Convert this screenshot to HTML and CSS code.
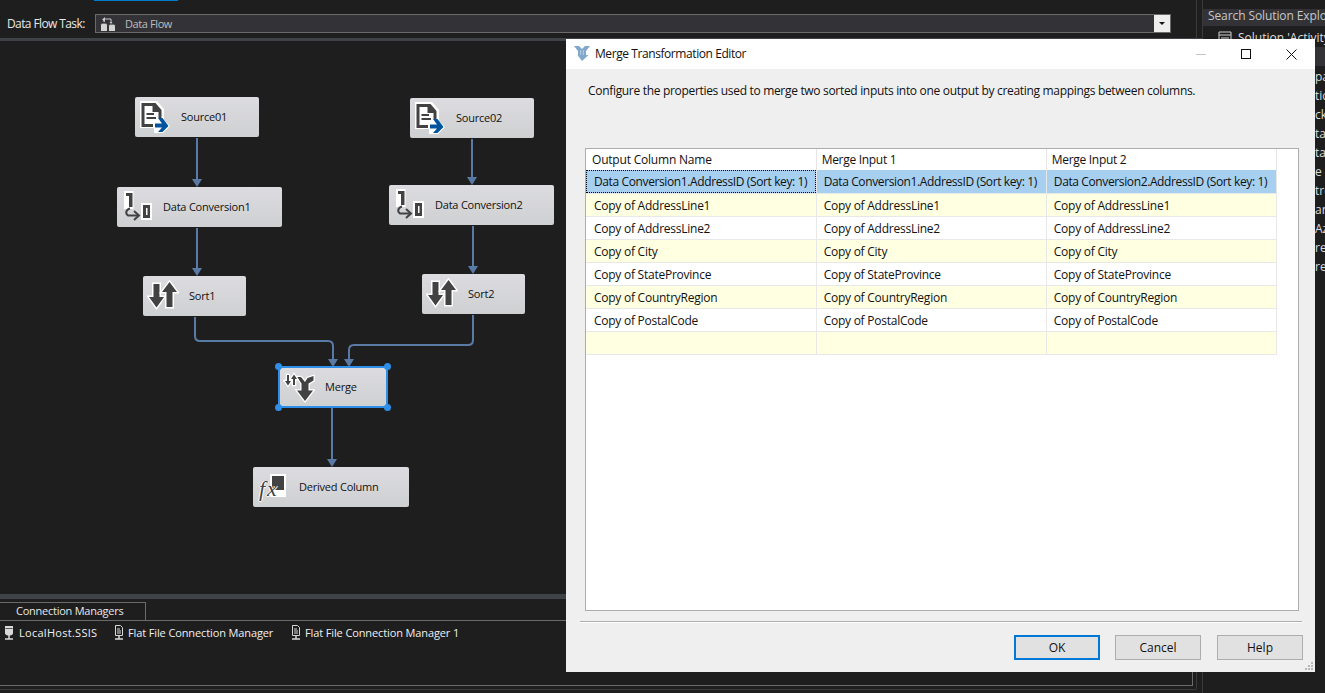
FILE: index.html
```html
<!DOCTYPE html>
<html lang="en">
<head>
<meta charset="utf-8">
<title>Merge Transformation Editor</title>
<link rel="stylesheet" href="styles.css">
</head>
<body>
<svg class="defs" width="0" height="0" aria-hidden="true">
  <defs>
    <symbol id="i-source" viewBox="0 0 32 33">
      <path d="M1 1h17l7 8v11l6 6-7 7h-9v-5H1z" fill="#fff"/>
      <path d="M2.500 3h14l6 7v8h-3v-6h-6V6H5.500v18H14v3H2.500z" fill="#424242"/>
      <path d="M7.500 13h7.500v2H7.500zM7.500 17h9.500v2H7.500z" fill="#424242"/>
      <path d="M16 23.500h7l-4-5.500h4.500l6 8-6 6H19l4-4.500h-7z" fill="#00539c"/>
    </symbol>
    <symbol id="i-conv" viewBox="0 0 32 33">
      <path d="M3 1h9.500v18H3zM20 13h11v17H20z" fill="#fff"/>
      <path d="M5 3h6.500v14H8V6H5z" fill="#424242"/>
      <path fill-rule="evenodd" d="M22 15h7v13h-7zM25 18v7h1.500v-7z" fill="#424242"/>
      <path d="M9 18.500c-4 1-5 5-2 7h11" fill="none" stroke="#424242" stroke-width="2"/>
      <path d="M13 21l5 4.500-5 4.500" fill="none" stroke="#424242" stroke-width="2"/>
    </symbol>
    <symbol id="i-sort" viewBox="0 0 32 33">
      <g fill="#424242" stroke="#fff" stroke-width="3" paint-order="stroke">
        <path d="M6.500 5h6v13h4.500l-7.500 10.500L2 18h4.500z"/>
        <path d="M19.500 28V13H15l7.500-10L30 13h-4.500v15z"/>
      </g>
    </symbol>
    <symbol id="i-merge" viewBox="0 0 32 33">
      <g fill="#424242" stroke="#fff" stroke-width="2.500" paint-order="stroke">
        <path d="M14 7h4l4 5 2.500-4 6-2v4.500l-5 3v7h4.500L22 31l-8-10.500h4.500v-7z"/>
        <path d="M4 5h2v6h2l-3 4.500L2 11h2z"/>
        <path d="M10 15V9H8l3-4.500L14 9h-2v6z"/>
      </g>
    </symbol>
    <symbol id="i-fx" viewBox="0 0 32 33">
      <path d="M13 4h16v23H13z" fill="#fff"/>
      <path d="M15 6h12v14H15z" fill="#424242"/>
    </symbol>
    <symbol id="i-flow" viewBox="0 0 16 16">
      <path d="M1 8h6v7H1zM9 9h6v6H9z" fill="#d4d4d4"/>
      <path d="M1 8.500c0-1.500 6-1.500 6 0M9 9.500c0-1.500 6-1.500 6 0" fill="none" stroke="#777"/>
      <path d="M4 6V3h7v4" fill="none" stroke="#c8c8c8"/>
      <path d="M2 3.500l3-2.500v5zM9.500 6h3l-1.500 2z" fill="#c8c8c8"/>
    </symbol>
    <symbol id="i-db" viewBox="0 0 11 16">
      <path d="M2 1h8v7c0 2-2 2.500-4 2.500S2 10 2 8z" fill="#d8d8d8"/>
      <path d="M2.500 3.500h7" stroke="#555"/>
      <path d="M6 10v4M2 14h8" stroke="#d8d8d8" stroke-width="1.500"/>
    </symbol>
    <symbol id="i-file" viewBox="0 0 11 16">
      <path d="M2.500 .5h5l2 2v8h-7z" fill="#1e1e1e" stroke="#d8d8d8"/>
      <path d="M4 4h3M4 6h4M4 8h4" stroke="#d8d8d8"/>
      <path d="M6 11v3M2 14h8" stroke="#d8d8d8" stroke-width="1.500"/>
    </symbol>
    <symbol id="i-tool" viewBox="0 0 16 16">
      <path d="M0 0h5l3 3 3-3h5l-4 5v4h2.500L8 15 3.500 9H4V5z" fill="#7fa8cc"/>
      <path d="M6.500 4h3v5h-3z" fill="#dfe9f2"/>
      <path d="M8 4v5" stroke="#3f6f9e"/>
    </symbol>
  </defs>
</svg>

<div class="ide">
  <div class="main">
    <div class="tabline"><span class="active-tab"></span></div>
    <div class="taskbar">
      <span class="task-label">Data Flow Task:</span>
      <div class="combo">
        <svg class="combo-icon"><use href="#i-flow"/></svg>
        <span class="combo-text">Data Flow</span>
        <span class="combo-btn"><span class="combo-caret"></span></span>
      </div>
    </div>
    <div class="splitter"></div>

    <div class="canvas">
      <svg class="wires" width="1200" height="553" viewBox="0 41 1200 553">
        <g class="wire">
          <path d="M197 138V180"/>
          <path d="M197 228V270"/>
          <path d="M472 139V178"/>
          <path d="M473 226V267"/>
          <path d="M195 317V336q0 5 5 5H328q5 0 5 5V360"/>
          <path d="M473 315V340q0 5-5 5H354q-5 0-5 5V360"/>
          <path d="M332 408V460"/>
        </g>
        <g class="head">
          <path d="M192 179h10l-5 8z"/>
          <path d="M192 268h10l-5 8z"/>
          <path d="M467 177h10l-5 8z"/>
          <path d="M468 266h10l-5 8z"/>
          <path d="M328 359h10l-5 8z"/>
          <path d="M344 359h10l-5 8z"/>
          <path d="M327 459h10l-5 8z"/>
        </g>
      </svg>

      <div class="node n-src1"><svg class="node-icon"><use href="#i-source"/></svg><span>Source01</span></div>
      <div class="node n-src2"><svg class="node-icon"><use href="#i-source"/></svg><span>Source02</span></div>
      <div class="node n-conv1"><svg class="node-icon"><use href="#i-conv"/></svg><span>Data Conversion1</span></div>
      <div class="node n-conv2"><svg class="node-icon"><use href="#i-conv"/></svg><span>Data Conversion2</span></div>
      <div class="node n-sort1"><svg class="node-icon"><use href="#i-sort"/></svg><span>Sort1</span></div>
      <div class="node n-sort2"><svg class="node-icon"><use href="#i-sort"/></svg><span>Sort2</span></div>
      <div class="node n-merge selected">
        <svg class="node-icon"><use href="#i-merge"/></svg><span>Merge</span>
        <i class="handle h-tl"></i><i class="handle h-tr"></i><i class="handle h-bl"></i><i class="handle h-br"></i>
      </div>
      <div class="node n-derived">
        <svg class="node-icon"><use href="#i-fx"/></svg>
        <em class="fx">fx</em>
        <span>Derived Column</span>
      </div>
    </div>

    <div class="splitter splitter-wide"></div>
    <div class="cm">
      <div class="cm-tabs"><span class="cm-tab">Connection Managers</span></div>
      <div class="cm-list">
        <span class="cm-item cm-db"><svg class="cm-icon"><use href="#i-db"/></svg>LocalHost.SSIS</span>
        <span class="cm-item cm-f1"><svg class="cm-icon"><use href="#i-file"/></svg>Flat File Connection Manager</span>
        <span class="cm-item cm-f2"><svg class="cm-icon"><use href="#i-file"/></svg>Flat File Connection Manager 1</span>
      </div>
    </div>
    <div class="statusline"></div>
  </div>

  <aside class="explorer">
    <div class="search">Search Solution Explorer</div>
    <div class="tree">
      <div class="tree-row solution">
        <svg class="sol-icon" viewBox="0 0 14 14"><path d="M1 1h12v11H1z" fill="none" stroke="#d0d0d0"/><path d="M1 4h12M3 7h8M3 9.500h8" stroke="#d0d0d0"/></svg>
        <span>Solution 'Activity</span>
      </div>
      <div class="tree-row sel"></div>
      <div class="tree-row frag">pa</div>
      <div class="tree-row frag">tic</div>
      <div class="tree-row frag">cka</div>
      <div class="tree-row frag">tag</div>
      <div class="tree-row frag">tag</div>
      <div class="tree-row frag">e P</div>
      <div class="tree-row frag">tro</div>
      <div class="tree-row frag">an</div>
      <div class="tree-row frag">Az</div>
      <div class="tree-row frag">re-</div>
      <div class="tree-row frag">re</div>
    </div>
  </aside>
</div>

<section class="dialog">
  <header class="titlebar">
    <svg class="title-icon"><use href="#i-tool"/></svg>
    <span class="title-text">Merge Transformation Editor</span>
    <div class="win-btns">
      <span class="win-min"></span>
      <span class="win-max"></span>
      <svg class="win-close" viewBox="0 0 11 11"><path d="M.5.5l10 10M10.500.5l-10 10" stroke="#111" fill="none"/></svg>
    </div>
  </header>
  <div class="dialog-body">
    <p class="intro">Configure the properties used to merge two sorted inputs into one output by creating mappings between columns.</p>
    <div class="grid-box">
      <table class="grid">
        <thead>
          <tr><th>Output Column Name</th><th>Merge Input 1</th><th>Merge Input 2</th></tr>
        </thead>
        <tbody>
          <tr class="r-sel"><td class="focus">Data Conversion1.AddressID (Sort key: 1)</td><td>Data Conversion1.AddressID (Sort key: 1)</td><td>Data Conversion2.AddressID (Sort key: 1)</td></tr>
          <tr class="r-alt"><td>Copy of AddressLine1</td><td>Copy of AddressLine1</td><td>Copy of AddressLine1</td></tr>
          <tr><td>Copy of AddressLine2</td><td>Copy of AddressLine2</td><td>Copy of AddressLine2</td></tr>
          <tr class="r-alt"><td>Copy of City</td><td>Copy of City</td><td>Copy of City</td></tr>
          <tr><td>Copy of StateProvince</td><td>Copy of StateProvince</td><td>Copy of StateProvince</td></tr>
          <tr class="r-alt"><td>Copy of CountryRegion</td><td>Copy of CountryRegion</td><td>Copy of CountryRegion</td></tr>
          <tr><td>Copy of PostalCode</td><td>Copy of PostalCode</td><td>Copy of PostalCode</td></tr>
          <tr class="r-alt"><td></td><td></td><td></td></tr>
        </tbody>
      </table>
    </div>
    <div class="rule"></div>
    <div class="actions">
      <button class="btn btn-default" type="button">OK</button>
      <button class="btn" type="button">Cancel</button>
      <button class="btn btn-help" type="button">Help</button>
    </div>
    <svg class="grip" viewBox="0 0 9 9"><path d="M6 0h2v2H6zM3 3h2v2H3zM6 3h2v2H6zM0 6h2v2H0zM3 6h2v2H3zM6 6h2v2H6z" fill="#b8b8b8"/></svg>
  </div>
</section>
</body>
</html>
```

FILE: styles.css
```css
* { box-sizing: border-box; }

html, body {
  margin: 0;
  height: 693px;
  overflow: hidden;
  background: #1e1e1e;
  font-family: "Open Sans", "Noto Sans", sans-serif;
  font-size: 12px;
  color: #f1f1f1;
}

.defs { position: absolute; }

.ide {
  display: flex;
  width: 1325px;
  height: 693px;
}

.main {
  width: 1203px;
  height: 693px;
  display: flex;
  flex-direction: column;
  border-right: 1px solid #3a3a3a;
  position: relative;
}
.main::after {
  content: "";
  position: absolute;
  left: 1196px;
  top: 0;
  bottom: 4px;
  width: 1px;
  background: #3a3a3a;
}

.tabline { height: 14px; flex: none; }
.active-tab {
  display: block;
  width: 84px;
  height: 1px;
  margin-left: 94px;
  background: #007acc;
}

.taskbar {
  height: 24px;
  flex: none;
  display: flex;
  padding: 0 31px 5px 7px;
  align-items: flex-start;
}
.task-label {
  width: 88px;
  flex: none;
  line-height: 19px;
  letter-spacing: -.6px;
  color: #e8e8e8;
}
.combo {
  flex: 1;
  height: 19px;
  display: flex;
  align-items: center;
  background: #333337;
  border: 1px solid #6a6a6a;
  padding-left: 4px;
}
.combo-icon { width: 16px; height: 16px; flex: none; }
.combo-text {
  margin-left: 9px;
  color: #bdbdbd;
  font-size: 11px;
  letter-spacing: -.4px;
  flex: 1;
}
.combo-btn {
  width: 16px;
  height: 17px;
  background: #eeeeee;
  display: flex;
  align-items: center;
  justify-content: center;
}
.combo-caret {
  border: 3px solid transparent;
  border-top: 3px solid #111;
  border-bottom: 0;
}

.splitter {
  height: 3px;
  background: #3f4246;
  flex: none;
}
.splitter-wide { height: 5px; }

.canvas {
  position: relative;
  height: 553px;
  flex: none;
}

.wires {
  position: absolute;
  left: 0;
  top: 0;
}
.wire path { fill: none; stroke: #5a7aa6; stroke-width: 2; }
.head path { fill: #5a7aa6; }

.node {
  position: absolute;
  height: 40px;
  display: flex;
  align-items: center;
  padding-left: 46px;
  color: #111;
  font-size: 11px;
  border-radius: 2px;
  background: linear-gradient(#dcdce0, #cfd0d2);
  white-space: nowrap;
}
.node span { position: relative; top: -1px; letter-spacing: -.22px; }
.node-icon {
  position: absolute;
  left: 4px;
  top: 3px;
  width: 32px;
  height: 33px;
}

.n-src1 { left: 135px; top: 56px; width: 124px; }
.n-src2 { left: 410px; top: 57px; width: 124px; }
.n-conv1 { left: 117px; top: 146px; width: 165px; }
.n-conv2 { left: 389px; top: 144px; width: 165px; }
.n-sort1 { left: 143px; top: 235px; width: 103px; }
.n-sort2 { left: 422px; top: 233px; width: 103px; }
.n-merge { left: 279px; top: 326px; width: 108px; }
.n-derived { left: 253px; top: 426px; width: 156px; }

.selected {
  outline: 2px solid #2f8fe8;
  outline-offset: -1px;
}
.handle {
  position: absolute;
  width: 7px;
  height: 7px;
  background: #2f8fe8;
  border-radius: 50%;
}
.h-tl { left: -4px; top: -4px; }
.h-tr { right: -4px; top: -4px; }
.h-bl { left: -4px; bottom: -4px; }
.h-br { right: -4px; bottom: -4px; }

.fx {
  position: absolute;
  left: 6px;
  top: 10px;
  font-family: "Liberation Serif", serif;
  font-size: 22px;
  line-height: 24px;
  letter-spacing: 2px;
  font-style: italic;
  color: #424242;
  text-shadow: 1px 0 0 #fff, -1px 0 0 #fff, 0 1px 0 #fff;
}

.cm { flex: none; }
.cm-tabs {
  height: 22px;
  padding-top: 3px;
  border-bottom: 1px solid #6a6a6a;
}
.cm-tab {
  display: block;
  width: 146px;
  height: 18px;
  border: 1px solid #6a6a6a;
  border-left: 0;
  border-bottom: 0;
  padding-left: 16px;
  line-height: 16px;
  font-size: 11px;
  letter-spacing: -.25px;
  color: #e8e8e8;
}
.cm-list {
  display: flex;
  height: 65px;
  padding: 3px 0 0 3px;
  border-bottom: 1px solid #6a6a6a;
  border-right: 1px solid #6a6a6a;
  margin-right: 9px;
}
.cm-item {
  display: flex;
  align-items: flex-start;
  gap: 4px;
  font-size: 11px;
  line-height: 18px;
  letter-spacing: -.12px;
  white-space: nowrap;
  color: #f0f0f0;
}
.cm-db { width: 110px; gap: 5px; letter-spacing: .28px; }
.cm-f1 { width: 177px; }
.cm-icon { width: 11px; height: 16px; flex: none; margin-top: 1px; }

.statusline {
  flex: 1;
  margin: 3px 6px 0 0;
  border-top: 1px solid #3a3a3a;
}

.explorer {
  flex: 1;
  min-width: 0;
  overflow: hidden;
  white-space: nowrap;
}
.search {
  margin-top: 9px;
  height: 17px;
  padding-left: 5px;
  line-height: 13px;
  background: #333337;
  color: #c8c8c8;
  font-size: 12px;
  letter-spacing: -.1px;
}
.tree { padding-top: 2px; }
.tree-row {
  height: 19px;
  line-height: 20px;
  font-size: 12px;
  color: #dcdcdc;
}
.solution {
  display: flex;
  align-items: center;
  gap: 6px;
  padding-left: 15px;
}
.sol-icon { width: 14px; height: 14px; flex: none; }
.sel { background: #333337; }
.frag { padding-left: 112px; line-height: 22px; }

.dialog {
  position: absolute;
  left: 566px;
  top: 39px;
  width: 749px;
  height: 633px;
  background: #efefef;
  color: #111;
  font-size: 12px;
  display: flex;
  flex-direction: column;
}
.titlebar {
  height: 30px;
  flex: none;
  background: #fff;
  display: flex;
  align-items: center;
  padding-left: 8px;
}
.title-icon { width: 16px; height: 16px; flex: none; }
.title-text { margin-left: 5px; letter-spacing: -.42px; position: relative; top: -1px; }
.win-btns {
  margin-left: auto;
  display: flex;
  align-items: center;
}
.win-min { width: 10px; height: 1px; background: #c4c4c4; margin-right: 35px; }
.win-max { width: 10px; height: 10px; border: 1px solid #111; margin-right: 35px; }
.win-close { width: 11px; height: 11px; margin-right: 18px; }

.dialog-body {
  flex: 1;
  position: relative;
  padding: 0 12px 0 19px;
  display: flex;
  flex-direction: column;
}
.intro {
  margin: 14px 0 0 3px;
  height: 65px;
  line-height: 16px;
  letter-spacing: -.315px;
  white-space: nowrap;
}
.grid-box {
  width: 714px;
  height: 463px;
  background: #fff;
  border: 1px solid #adadad;
  flex: none;
}
.grid {
  border-collapse: collapse;
  table-layout: fixed;
  width: 691px;
}
.grid th {
  width: 230px;
  height: 21px;
  padding: 0 0 1px 5px;
  text-align: left;
  font-weight: 400;
  border-right: 1px solid #e6e6e6;
  letter-spacing: -.3px;
}
.grid th:first-child { padding-left: 6px; letter-spacing: -.2px; }
.grid td {
  height: 23px;
  padding: 1px 0 0 7px;
  border-right: 1px solid #e8e8e8;
  border-bottom: 1px solid #e8e8e8;
  letter-spacing: -.25px;
  white-space: nowrap;
  overflow: hidden;
}
.grid td:first-child { padding-left: 8px; }
.r-alt td { background: #ffffe1; }
.grid .r-sel td { background: #a6cff0; letter-spacing: -.38px; }
.grid td.focus { outline: 1px dotted #000; outline-offset: -1px; }

.rule {
  height: 2px;
  flex: none;
  margin: 10px 0 0 -5px;
  width: 722px;
  background: #adadad;
  border-bottom: 1px solid #fff;
}
.actions {
  display: flex;
  justify-content: flex-end;
  gap: 15px;
  margin-top: 12px;
}
.btn {
  width: 86px;
  height: 25px;
  padding: 0;
  background: #e1e1e1;
  border: 1px solid #adadad;
  font-family: inherit;
  font-size: 12px;
  color: #111;
}
.btn-default { border: 2px solid #0078d7; }
.btn-help { margin-left: 1px; }
.grip {
  position: absolute;
  right: 1px;
  bottom: 1px;
  width: 9px;
  height: 9px;
}
```
